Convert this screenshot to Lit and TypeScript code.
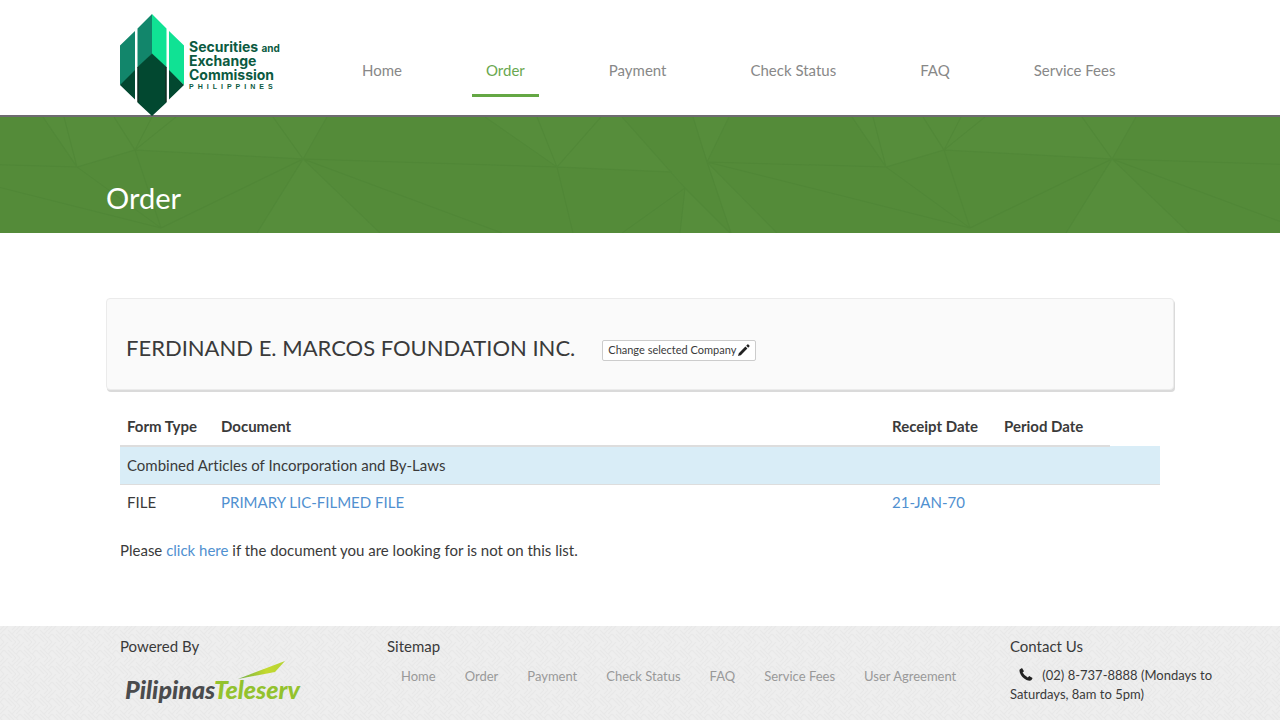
import { LitElement, html, css, svg } from "lit";
import { customElement } from "lit/decorators.js";

const NAV = ["Home", "Order", "Payment", "Check Status", "FAQ", "Service Fees"];
const SITEMAP = [...NAV, "User Agreement"];

@customElement("sec-logo")
class SecLogo extends LitElement {
  static styles = css`
    :host { display: block; }
    .logo { display: block; }
    .name { font: 700 14px "Inter", "Liberation Sans", sans-serif; fill: #0b5a41; }
    .small { font-size: 10px; }
    .country { font: 700 7px "Liberation Sans", sans-serif; fill: #0b5a41; letter-spacing: 4px; }
  `;
  render() {
    return html`<svg class="logo" width="166" height="104" viewBox="0 0 166 104" role="img" aria-label="Securities and Exchange Commission Philippines">
      <path fill="#12866b" d="M0 31.500 15 17v49L0 71z M17.500 14.500 32 0v40L17.500 54z" />
      <path fill="#10e294" d="M32 0 46.500 14.500V54L32 40z M49 17 64 31.500V71L49 57z" />
      <path fill="#024830" d="M0 71 15 56v29.500z M49 56 64 71 49 85.500z M32 39.500 46.500 53v35.500L32 102 17.500 88.500V53z" />
      <path stroke="#14201b" d="M18 53v35M46 53v35" />
      <text class="name" x="69" y="38">Securities <tspan class="small">and</tspan></text>
      <text class="name" x="69" y="52">Exchange</text>
      <text class="name" x="69" y="66">Commission</text>
      <text class="country" x="69" y="75">PHILIPPINES</text>
    </svg>`;
  }
}

@customElement("teleserv-logo")
class TeleservLogo extends LitElement {
  static styles = css`
    :host { display: block; }
    .logo { display: block; }
    .word { font: italic 900 25px Lato, "Open Sans", sans-serif; }
    .dark { fill: #4a4b4d; }
    .lime { fill: #93c22d; }
  `;
  render() {
    return html`<svg class="logo" width="182" height="50" viewBox="0 0 182 50" role="img" aria-label="Pilipinas Teleserv">
      <defs>
        <linearGradient id="swoosh"><stop offset="0" stop-color="#6fae45" /><stop offset=".6" stop-color="#c4d92e" /><stop offset="1" stop-color="#b5d334" /></linearGradient>
      </defs>
      <path fill="url(#swoosh)" d="M118 22 165 4 155 15z" />
      <text class="word dark" x="5" y="42">Pilipinas</text>
      <text class="word lime" x="94" y="42">Teleserv</text>
    </svg>`;
  }
}

@customElement("app-root")
class AppRoot extends LitElement {
  static styles = css`
    :host {
      display: flex;
      flex-direction: column;
      min-height: 100vh;
      overflow-x: hidden;
      background: #fff;
      color: #3a3a3a;
      font: 15px/21px Lato, sans-serif;
      font-variant-ligatures: none;
    }
    * { box-sizing: border-box; }
    a { color: #5090d0; text-decoration: none; }
    .container { width: calc(100% - 32px); max-width: 1068px; margin: 0 auto; }

    .header { border-bottom: 2px solid #6e6b70; }
    .bar { display: flex; padding: 14px 14px 0; height: 115px; }
    .brand { position: relative; flex: none; }
    .nav { display: flex; flex: 1; gap: 56px; padding: 36px 0 0 62px; align-items: flex-start; }
    .link { padding: 10px 14px 13px; border-bottom: 3px solid transparent; color: #888; white-space: nowrap; }
    .current { color: #6aa84f; border-color: #64a744; }

    .banner { display: grid; background: #548b39; }
    .facets { grid-area: 1 / 1; width: 100%; height: 116px; }
    .heading { grid-area: 1 / 1; align-self: end; padding-bottom: 17px; }
    .title { margin: 0; color: #fff; font-size: 29px; line-height: 36px; font-weight: 400; }

    .main { flex: 1; padding-top: 65px; padding-bottom: 64px; }
    .company {
      display: flex;
      align-items: center;
      gap: 27px;
      min-height: 92px;
      padding: 8px 19px 0;
      border: 1px solid #ebebeb;
      border-radius: 4px;
      background: #fafafa;
      box-shadow: 1px 2px 0 #dadada;
    }
    .name { margin: 0; font-size: 22px; line-height: 32px; font-weight: 400; }
    .change {
      display: inline-flex;
      align-items: center;
      gap: 2px;
      height: 21px;
      margin-top: 4px;
      padding: 0 5px;
      border: 1px solid #ccc;
      border-radius: 2px;
      background: #fff;
      color: #3a3a3a;
      font: 11px/16px Lato, sans-serif;
    }
    .results { padding: 18px 14px 0; }
    .documents { width: 100%; border-collapse: collapse; table-layout: fixed; }
    .form { width: 94px; }
    .receipt { width: 112px; }
    .period { width: 113px; }
    .extra { width: 50px; }
    th, td { padding: 8px 7px; text-align: left; vertical-align: top; }
    th { border-bottom: 2px solid #ddd; }
    .blank { border: 0; }
    .group td { background: #d9edf7; border-bottom: 1px solid #ddd; }
    .file td { padding-top: 7px; }
    .note { margin: 19px 0 0; }

    .footer { background: #eeeeee; display: grid; }
    .weave { grid-area: 1 / 1; width: 100%; height: 100%; min-height: 0; contain: size; }
    .columns { grid-area: 1 / 1; display: grid; grid-template-columns: 25% 58.333% 25%; }
    .column { padding: 9px 14px 0; }
    .label { margin: 0; font-size: 15px; line-height: 22px; font-weight: 400; }
    .sitemap { display: flex; gap: 29px; margin: 9px 0 0; padding: 0 14px; list-style: none; font-size: 13px; line-height: 20px; white-space: nowrap; }
    .sitemap a { color: #999; }
    .contact { margin: 9px 0 0; padding-bottom: 16px; font-size: 13px; line-height: 19px; }
    .phone { margin: 0 6px 0 9px; vertical-align: -1px; }
  `;

  render() {
    return html`
      <header class="header">
        <div class="container bar">
          <a class="brand" href="#" aria-label="Home page"><sec-logo></sec-logo></a>
          <nav class="nav">
            ${NAV.map((n) => html`<a class="link ${n === "Order" ? "current" : ""}" href="#">${n}</a>`)}
          </nav>
        </div>
      </header>
      <section class="banner">
        <svg class="facets" aria-hidden="true">
          <defs>
            <pattern id="facet" width="809" height="116" patternUnits="userSpaceOnUse">
              ${svg`<path fill="#568d3b" d="M43 0H273L303 42 135 33 77 50z M273 0H327L303 42z M303 42 257 116H380z M485 0H601L557 50z M622 0 685 71 672 55 557 50 601 0z M693 0H729L707 45 777 116H731z M685 71 730 116H680z" />
              <path fill="none" stroke="#4c8234" stroke-opacity=".45" stroke-width="1.500" d="M77 50 43 0M77 50 64 0M77 50 135 33M77 50-102 45M77 50 161 111M135 33 114 0M135 33 152 0M135 33 176 0M135 33 303 42M135 33 161 111M303 42 273 0M303 42 327 0M303 42 557 50M303 42 161 111M303 42 257 116M303 42 380 116M303 42 502 116M557 50 485 0M557 50 537 0M557 50 601 0M557 50 672 55M557 50 573 116M622 0 685 71 730 116M685 71 622 116M685 71 680 116M707 45 693 0M707 45 729 0M707 45 809 48M707 45 970 111M-102 45 161 111M707 45 731 116M707 45 777 116" />`}
            </pattern>
          </defs>
          <rect width="100%" height="100%" fill="url(#facet)" />
        </svg>
        <div class="container heading"><h1 class="title">Order</h1></div>
      </section>
      <main class="container main">
        <section class="company">
          <h2 class="name">FERDINAND E. MARCOS FOUNDATION INC.</h2>
          <button class="change" type="button">Change selected Company
            <svg width="12" height="12" viewBox="0 0 12 12" aria-hidden="true"><path fill="#222" d="M0 12 .8 9.200 7.400 2.600 9.400 4.600 2.800 11.200zM8.200 1.800 9.400.6Q9.900.1 10.400.6L11.400 1.600Q11.900 2.100 11.400 2.600L10.200 3.800z" /></svg>
          </button>
        </section>
        <div class="results">
          <table class="documents">
            <colgroup><col class="form" /><col /><col class="receipt" /><col class="period" /><col class="extra" /></colgroup>
            <thead>
              <tr><th>Form Type</th><th>Document</th><th>Receipt Date</th><th>Period Date</th><td class="blank"></td></tr>
            </thead>
            <tbody>
              <tr class="group"><td colspan="5">Combined Articles of Incorporation and By-Laws</td></tr>
              <tr class="file"><td>FILE</td><td><a href="#">PRIMARY LIC-FILMED FILE</a></td><td><a href="#">21-JAN-70</a></td><td></td><td></td></tr>
            </tbody>
          </table>
          <p class="note">Please <a href="#">click here</a> if the document you are looking for is not on this list.</p>
        </div>
      </main>
      <footer class="footer">
        <svg class="weave" aria-hidden="true">
          <defs>
            <pattern id="weave" width="16" height="16" patternUnits="userSpaceOnUse">
              ${svg`<path fill="none" stroke="#e8e8e8" stroke-width="1.200" d="M0 4 4 0M0 8 8 0M0 12 4 8M4 8 12 16M8 4 16 12M8 8 16 16M12 4 16 0M12 8 16 4M0 12 4 16" />`}
            </pattern>
          </defs>
          <rect width="100%" height="100%" fill="url(#weave)" />
        </svg>
        <div class="container columns">
          <section class="column"><h3 class="label">Powered By</h3><teleserv-logo></teleserv-logo></section>
          <section class="column">
            <h3 class="label">Sitemap</h3>
            <ul class="sitemap">${SITEMAP.map((n) => html`<li><a href="#">${n}</a></li>`)}</ul>
          </section>
          <section class="column">
            <h3 class="label">Contact Us</h3>
            <p class="contact">
              <svg class="phone" width="14" height="13" viewBox="0 0 14 13" aria-hidden="true"><path fill="#222" d="M1 1.200 3 0 5 3.200 3.600 4.500Q5.500 8 8.800 9.400L10.200 8 13.600 10 12.500 12Q11 13.500 7.500 12 2.500 9.500.8 4.500 0 2 1 1.200z" /></svg>
              (02) 8-737-8888 (Mondays to Saturdays, 8am to 5pm)
            </p>
          </section>
        </div>
      </footer>
    `;
  }
}
